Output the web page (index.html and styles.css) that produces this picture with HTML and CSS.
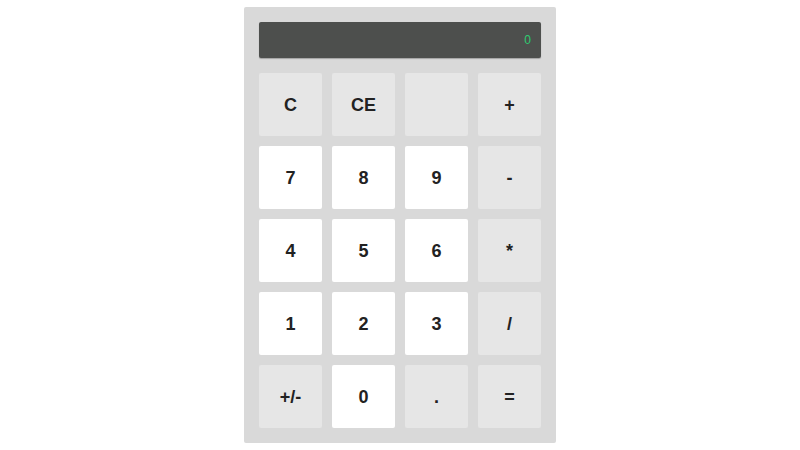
FILE: index.html
```html
<!DOCTYPE html>
<html lang="en">

<head>
    <meta charset="UTF-8">
    <meta name="viewport" content="width=device-width, initial-scale=1.0">
    <title>Calculator</title>
    <link rel="stylesheet" href="styles.css">
</head>

<body>
    <div class="calculator">
        <div class="display" id="display">0</div>
        <div class="keys">
            <button class="key op">C</button>
            <button class="key op">CE</button>
            <button class="key op"></button>
            <button class="key op">+</button>

            <button class="key num">7</button>
            <button class="key num">8</button>
            <button class="key num">9</button>
            <button class="key op">-</button>

            <button class="key num">4</button>
            <button class="key num">5</button>
            <button class="key num">6</button>
            <button class="key op">*</button>

            <button class="key num">1</button>
            <button class="key num">2</button>
            <button class="key num">3</button>
            <button class="key op">/</button>

            <button class="key op">+/-</button>
            <button class="key num">0</button>
            <button class="key op">.</button>
            <button class="key op">=</button>
        </div>
    </div>
</body>

</html>
```

FILE: styles.css
```css
body {
    margin: 0;
    padding-top: 7px;
    font-family: "Liberation Sans", Arial, sans-serif;
    background: #fff;
}

.calculator {
    width: 282px;
    margin: 0 auto;
    padding: 15px;
    background: #d9d9d9;
    border-radius: 2px;
}

.display {
    height: 36px;
    line-height: 36px;
    padding: 0 10px;
    margin-bottom: 15px;
    text-align: right;
    font-size: 12px;
    color: #2ecc71;
    background: #4d4f4d;
    border-radius: 2px;
    box-shadow: 0 1px 1px rgba(0, 0, 0, 0.25);
    box-sizing: border-box;
}

.keys {
    display: grid;
    grid-template-columns: repeat(4, 63px);
    grid-auto-rows: 63px;
    gap: 10px;
}

.key {
    border: none;
    border-radius: 2px;
    padding: 2px 0 0;
    font-family: inherit;
    font-size: 18px;
    font-weight: bold;
    color: #222;
    cursor: pointer;
}

.key.num {
    background: #fff;
}

.key.op {
    background: #e6e6e6;
}
```
